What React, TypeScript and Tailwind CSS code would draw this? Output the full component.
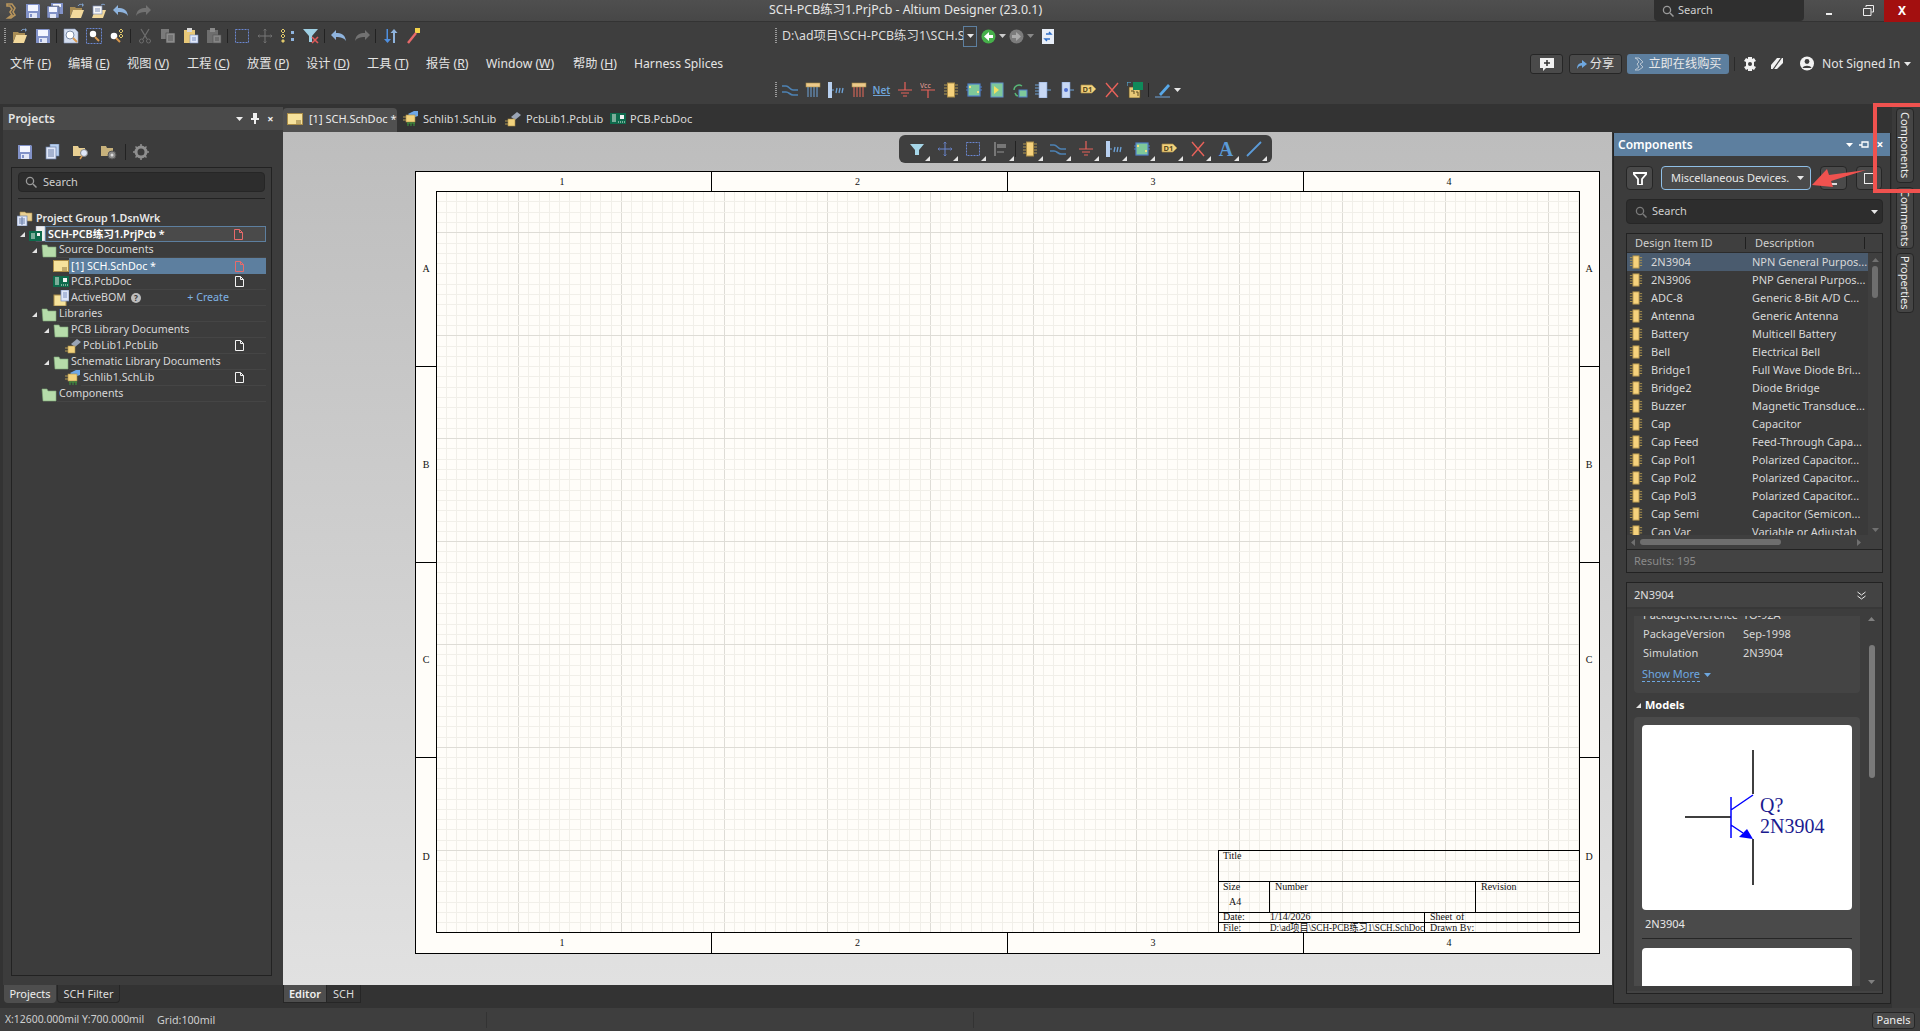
import React from "react";

type N = React.ReactNode;
const Svg = ({ w = 16, h = 16, children }: { w?: number; h?: number; children?: N }) => (
  <svg width={w} height={h} viewBox={`0 0 ${w} ${h}`} className="block shrink-0">
    {children}
  </svg>
);

/* ---------- toolbar icons ---------- */
const Logo = () => (
  <Svg w={12} h={16}>
    <path d="M2 1h5l3 4-2 4 2 3-4 3H3l4-3-2-3 2-3-2-3H2z" fill="none" stroke="#b8955c" strokeWidth="1.6" />
  </Svg>
);
const Floppy = () => (
  <Svg>
    <path d="M1 1h13l1 1v13H1z" fill="#8292c8" />
    <rect x="3" y="2" width="10" height="6" fill="#f4f6ff" />
    <rect x="4" y="10" width="8" height="5" fill="#e3e7f6" />
    <rect x="5" y="11" width="2" height="3" fill="#8292c8" />
  </Svg>
);
const FloppyAll = () => (
  <Svg w={18} h={16}>
    <path d="M5 0h12v11H5z" fill="#8292c8" />
    <rect x="7" y="1" width="8" height="3" fill="#f4f6ff" />
    <path d="M1 3h12v12H1z" fill="#8292c8" stroke="#3f3f3f" strokeWidth=".5" />
    <rect x="3" y="4" width="8" height="5" fill="#f4f6ff" />
    <rect x="4" y="11" width="6" height="4" fill="#e3e7f6" />
  </Svg>
);
const FolderOpen = () => (
  <Svg>
    <path d="M1 4h5l1 1h6v2H4l-3 7z" fill="#a98d55" />
    <path d="M4 7h11l-3 8H1z" fill="#f2d99c" />
    <path d="M9 3c1-2 3-2 5-1" fill="none" stroke="#7f9fc8" />
    <path d="M13 0l2 2-2 2z" fill="#7f9fc8" />
  </Svg>
);
const FolderDoc = () => (
  <Svg>
    <path d="M4 7h11l-3 8H1z" fill="#f2d99c" />
    <rect x="2" y="3" width="9" height="8" fill="#f8f8f8" stroke="#7f8fb8" strokeWidth=".7" />
    <path d="M4 6h5M4 8h5" stroke="#7f8fb8" />
    <path d="M10 2c1-1 3-1 4 0" fill="none" stroke="#7f9fc8" />
  </Svg>
);
const Undo = ({ c = "#8fb4de" }: { c?: string }) => (
  <Svg>
    <path d="M5 2v3c5 0 9 1 10 8-2-3-5-4-10-4v3L0 7z" fill={c} />
  </Svg>
);
const Redo = ({ c = "#727272" }: { c?: string }) => (
  <Svg>
    <path d="M11 2v3C6 5 2 6 1 13c2-3 5-4 10-4v3l5-5z" fill={c} />
  </Svg>
);
const ZoomDoc = () => (
  <Svg>
    <path d="M1 1h11l3 3v11H1z" fill="#d5dff0" stroke="#8a9cc0" strokeWidth=".6" />
    <circle cx="7" cy="7" r="4" fill="#fff" stroke="#7a8ca8" />
    <path d="M10 10l4 4" stroke="#d99a50" strokeWidth="2" />
  </Svg>
);
const ZoomBox = () => (
  <Svg>
    <rect x=".5" y=".5" width="15" height="15" fill="none" stroke="#6a87d0" strokeDasharray="2 1" />
    <circle cx="7" cy="6" r="3.2" fill="#fff" />
    <path d="M9 9l4 4" stroke="#d99a50" strokeWidth="2" />
  </Svg>
);
const ZoomSel = () => (
  <Svg>
    <circle cx="5" cy="8" r="3.3" fill="#fff" />
    <path d="M7 10l4 4" stroke="#d99a50" strokeWidth="2" />
    <path d="M12 1l2 2-2 2-2-2zM12 6l2 2-2 2-2-2z" fill="none" stroke="#e0c86a" />
  </Svg>
);
const Cut = () => (
  <Svg>
    <path d="M4 1l6 10M12 1L6 11" stroke="#6c6c6c" strokeWidth="1.3" />
    <circle cx="4.5" cy="13" r="2" fill="none" stroke="#6c6c6c" />
    <circle cx="11.5" cy="13" r="2" fill="none" stroke="#6c6c6c" />
  </Svg>
);
const Copy = () => (
  <Svg>
    <rect x="1" y="1" width="8" height="10" fill="#7a7a7a" />
    <rect x="6" y="5" width="9" height="10" fill="#8c8c8c" stroke="#444" strokeWidth=".6" />
    <path d="M8 8h5M8 10h5M8 12h5" stroke="#5a5a5a" />
  </Svg>
);
const Paste = ({ on = true }: { on?: boolean }) => (
  <Svg>
    <rect x="1" y="2" width="11" height="13" fill={on ? "#e8c878" : "#6e6e6e"} />
    <rect x="4" y="0" width="5" height="4" fill={on ? "#d8d8d8" : "#8a8a8a"} />
    <rect x="7" y="7" width="8" height="8" fill={on ? "#dfe7f8" : "#858585"} stroke={on ? "#7a8fc0" : "#555"} strokeWidth=".6" />
    <path d="M9 10h4M9 12h4" stroke={on ? "#7a8fc0" : "#555"} />
  </Svg>
);
const DashRect = ({ c = "#6a87d0" }: { c?: string }) => (
  <Svg>
    <rect x="1.5" y="1.5" width="13" height="13" fill="none" stroke={c} strokeDasharray="2 1" strokeWidth="1" />
  </Svg>
);
const Cross = ({ c = "#777" }: { c?: string }) => (
  <Svg>
    <path d="M8 1v14M1 8h14" stroke={c} />
    <path d="M6.5 2.5L8 1l1.5 1.5M6.5 13.5L8 15l1.5-1.5M2.5 6.5L1 8l1.5 1.5M13.5 6.5L15 8l-1.5 1.5" fill="none" stroke={c} strokeWidth=".7" />
  </Svg>
);
const SelToggle = () => (
  <Svg>
    <path d="M3 1l2 2-2 2-2-2zM3 6l2 2-2 2-2-2z" fill="none" stroke="#e0c86a" />
    <path d="M3 11l2 2-2 2-2-2z" fill="#e0c86a" />
    <rect x="11" y="3" width="3" height="3" fill="#8fb4de" />
    <rect x="11" y="10" width="3" height="3" fill="#8fb4de" />
  </Svg>
);
const FilterX = () => (
  <Svg>
    <path d="M0 1h15L9 8v6H6V8z" fill="#9fd0e4" />
    <path d="M9 9l6 6M15 9l-6 6" stroke="#e05a5a" strokeWidth="1.6" />
  </Svg>
);
const UpDown = () => (
  <Svg>
    <path d="M5 15V5H2l3.5-4L9 5H6.500v10z" fill="#4f90e0" transform="rotate(180 5.5 8)" />
    <path d="M11 15V5H8.500L12 1l3.500 4H13v10z" fill="#8fb4de" />
  </Svg>
);
const Wand = () => (
  <Svg>
    <rect x="10" y="0" width="5" height="5" fill="#f2d24a" />
    <path d="M11 5L3 15" stroke="#e86a6a" strokeWidth="2.4" />
  </Svg>
);

const Wires = () => (
  <Svg>
    <path d="M0 4h4c3 0 4 4 7 4h5M0 10h4c3 0 4 3 7 3h5" fill="none" stroke="#4d82b4" strokeWidth="1.6" />
  </Svg>
);
const Bus = ({ red = false }: { red?: boolean }) => (
  <Svg>
    <rect x="1" y="1" width="14" height="4" fill="#ecc98a" stroke="#a98c48" strokeWidth=".6" />
    <path d="M3 5v10M6 5v10M9 5v10M12 5v10" stroke={red ? "#e86a5a" : "#6ea3d8"} />
  </Svg>
);
const PinBar = () => (
  <Svg>
    <rect x="0" y="0" width="4" height="16" fill="#b8d0f0" />
    <path d="M4 8h2" stroke="#6ea3d8" />
    <path d="M8 11l1-5M11 11l1-5M14 11l1-5" stroke="#6ea3d8" strokeWidth="1.3" />
  </Svg>
);
const NetLabel = () => (
  <span className="text-[10px] leading-none font-semibold text-[#6ea3d8] border-b border-[#6ea3d8]">Net</span>
);
const Gnd = () => (
  <Svg>
    <path d="M8 0v8M1 8h14M4 11h8M6 14h4" stroke="#e8625a" strokeWidth="1.2" />
  </Svg>
);
const Vcc = () => (
  <Svg>
    <text x="0" y="6" fontSize="7" fill="#e8a09a">Vcc</text>
    <path d="M1 8h14M8 8v8" stroke="#e8625a" strokeWidth="1.2" />
  </Svg>
);
const Chip = ({ s = 16 }: { s?: number }) => (
  <svg width={s} height={s} viewBox="0 0 16 16" className="block shrink-0">
    <rect x="4.500" y="1" width="7" height="14" fill="#f6d27c" stroke="#a98c48" />
    <path d="M1 3h3M1 6h3M1 9h3M1 12h3M12 3h3M12 6h3M12 9h3M12 12h3" stroke="#b59a50" />
  </svg>
);
const Sheet = () => (
  <Svg>
    <rect x="2" y="2" width="12" height="12" fill="#7ec89a" stroke="#4f7fc8" strokeWidth="1.2" />
    <path d="M0 5h2M0 8h2M14 5h2M14 8h2" stroke="#4f7fc8" />
    <rect x="3" y="4" width="2" height="2" fill="#f2e080" />
    <rect x="11" y="9" width="2" height="2" fill="#f2e080" />
  </Svg>
);
const SheetEntry = () => (
  <Svg>
    <rect x="2" y="1" width="12" height="14" fill="#7ec89a" stroke="#5f8fc8" />
    <path d="M5 4l5 4-5 4z" fill="#f2e060" />
  </Svg>
);
const Recycle = () => (
  <Svg>
    <path d="M2 8a5 5 0 0 1 8-4" fill="none" stroke="#58b878" strokeWidth="1.4" />
    <rect x="7" y="8" width="8" height="7" fill="#7ec89a" stroke="#4f7fc8" />
    <path d="M3 11a4 4 0 0 0 3 3" fill="none" stroke="#58b878" strokeWidth="1.4" />
  </Svg>
);
const DevSheet = ({ dot = false }: { dot?: boolean }) => (
  <Svg>
    <rect x="4" y="0" width="8" height="16" fill="#c8d8f4" stroke="#7a9ad0" strokeWidth=".6" />
    {dot ? <circle cx="8" cy="8" r="2" fill="#4f6fd0" /> : <path d="M0 3h4M0 6h4M0 9h4M0 12h4" stroke="#6ea3d8" />}
    <path d="M12 8h4" stroke="#6ea3d8" />
  </Svg>
);
const Port = () => (
  <svg width="18" height="16" viewBox="0 0 18 16" className="block shrink-0">
    <path d="M1 3h11l4 4-4 4H1z" fill="#f2d27c" stroke="#a98c48" strokeWidth=".7" />
    <text x="2.500" y="10" fontSize="7.500" fontWeight="700" fill="#5a4a20">D1</text>
  </svg>
);
const RedX = () => (
  <Svg>
    <path d="M2 1l12 14M14 1L2 15" stroke="#e8625a" strokeWidth="1.4" />
  </Svg>
);
const Room = () => (
  <Svg>
    <rect x="2" y="5" width="11" height="11" fill="#e8c878" stroke="#5a4a20" strokeWidth=".7" />
    <rect x="6" y="0" width="10" height="8" fill="#0f8a5a" />
    <path d="M4 9h3v3M9 10h2v4" fill="none" stroke="#5a4a20" />
    <path d="M0 4V0h4" fill="none" stroke="#58b8e8" />
  </Svg>
);
const Pen = () => (
  <Svg>
    <path d="M4 12L13 2l2 2-9 10z" fill="#58a8e8" />
    <path d="M0 15h15" stroke="#6ea3d8" />
  </Svg>
);
const Caret = ({ c = "#e8e8e8" }: { c?: string }) => (
  <svg width="7" height="4" viewBox="0 0 7 4" className="block shrink-0">
    <path d="M0 0h7L3.500 4z" fill={c} />
  </svg>
);

/* ---------- tree icons ---------- */
const FolderG = () => (
  <Svg>
    <path d="M1 3h5l1 2h8v10H2z" fill="#b6dcaa" stroke="#7fa878" strokeWidth=".6" />
  </Svg>
);
const SchDoc = () => (
  <Svg w={16} h={13}>
    <rect x=".5" y=".5" width="15" height="11" fill="#f6e29c" stroke="#a98c48" />
    <path d="M9 8h5M9 10h5" stroke="#8a7238" />
  </Svg>
);
const PcbDoc = () => (
  <Svg w={16} h={12}>
    <rect x="0" y="0" width="16" height="11" fill="#0e6a4c" />
    <path d="M2 2h4M2 4h4M2 6h4M2 8h4" stroke="#e8f0e8" />
    <rect x="10" y="2" width="4" height="4" fill="#f2f2f2" />
    <path d="M8 9h7" stroke="#e8f0e8" strokeDasharray="1 1" />
  </Svg>
);
const Bom = () => (
  <Svg>
    <rect x="1" y="5" width="12" height="11" fill="#f6e29c" stroke="#a98c48" />
    <rect x="8" y="0" width="8" height="11" fill="#dfe7f8" stroke="#7a8fc0" strokeWidth=".7" />
    <path d="M10 3h4M10 5h4M10 7h4" stroke="#7a8fc0" />
  </Svg>
);
const PcbLib = () => (
  <Svg>
    <path d="M6 6l6-5 4 3-6 5z" fill="#9aa4b4" />
    <rect x="3" y="8" width="7" height="7" fill="#f2d27c" stroke="#a98c48" strokeWidth=".6" />
    <path d="M0 10h3M0 13h3" stroke="#b59a50" />
  </Svg>
);
const SchLib = () => (
  <Svg>
    <path d="M5 3l6-3h4v5l-6 2z" fill="#6ea8e8" />
    <rect x="3" y="4" width="9" height="7" fill="#f2d27c" stroke="#a98c48" strokeWidth=".6" />
    <path d="M0 6h3M0 9h3" stroke="#b59a50" />
    <path d="M4 12h8M5 12v3M8 12v3M11 12v3" stroke="#3f9a3f" />
  </Svg>
);
const Group = () => (
  <Svg w={16} h={15}>
    <path d="M3 1h5l1 1h6v8H3z" fill="#e8cf92" stroke="#a98c48" strokeWidth=".6" />
    <rect x="0" y="5" width="10" height="10" fill="#dfe7f8" stroke="#6a7fa8" strokeWidth=".7" />
    <path d="M2 8h6M2 10h6M2 12h6M5 6v8" stroke="#6a7fa8" />
  </Svg>
);
const PrjIcon = () => (
  <Svg>
    <rect x="7" y="0" width="9" height="15" fill="#f0f0f0" stroke="#8a9cc0" strokeWidth=".5" />
    <rect x="0" y="5" width="13" height="10" fill="#0e6a4c" />
    <path d="M2 8h4M2 10h4M2 12h4" stroke="#e8f0e8" />
    <rect x="8" y="7" width="3" height="3" fill="#f2f2f2" />
  </Svg>
);
const Doc = ({ c = "#f2f2f2" }: { c?: string }) => (
  <svg width="9" height="11" viewBox="0 0 9 11" className="block shrink-0">
    <path d="M.5.5h5l3 3v7h-8zM5.500.5v3h3" fill="none" stroke={c} />
  </svg>
);
const Tri = () => (
  <svg width="5" height="5" viewBox="0 0 5 5" className="block">
    <path d="M5 0v5H0z" fill="#e4e4e4" />
  </svg>
);
const SearchI = ({ c = "#9a9a9a" }: { c?: string }) => (
  <svg width="12" height="12" viewBox="0 0 12 12" className="block shrink-0">
    <circle cx="5" cy="5" r="3.600" fill="none" stroke={c} strokeWidth="1.3" />
    <path d="M8 8l3.500 3.500" stroke={c} strokeWidth="1.500" />
  </svg>
);

/* ---------- pieces ---------- */
const Slot = ({ children, w = "w-[23px]" }: { children?: N; w?: string }) => (
  <div className={`${w} h-full flex items-center justify-center shrink-0`}>{children}</div>
);
const Sep = () => (
  <div className="w-[5px] h-full flex items-center justify-center shrink-0">
    <div className="w-px h-[14px] bg-[#222]" />
  </div>
);
const Grip = () => (
  <div className="w-[2px] h-[16px] shrink-0 bg-[repeating-linear-gradient(to_bottom,#9a9a9a_0,#9a9a9a_1px,transparent_1px,transparent_2px)]" />
);
const Menu = ({ zh, k, w }: { zh: string; k: string; w: string }) => (
  <span className={`${w} shrink-0 whitespace-nowrap`}>
    {zh} (<span className="underline">{k}</span>)
  </span>
);

type TreeRow = {
  pl: string;
  tri?: boolean;
  icon: N;
  text: N;
  right?: N;
  cls?: string;
};
const Row = ({ pl, tri = true, icon, text, right, cls = "border-b border-[#454545]" }: TreeRow) => (
  <div className={`flex h-4 items-center ${pl}`}>
    <div className="w-[10px] flex justify-center shrink-0">{tri ? <Tri /> : null}</div>
    <div className="w-4 ml-[2px] flex justify-center shrink-0">{icon}</div>
    <div className={`flex-1 h-4 min-w-0 flex items-center justify-between pl-[2px] pr-[22px] whitespace-nowrap ${cls}`}>
      {text}
      {right}
    </div>
  </div>
);

const parts: [string, string][] = [
  ["2N3904", "NPN General Purpos..."],
  ["2N3906", "PNP General Purpos..."],
  ["ADC-8", "Generic 8-Bit A/D C..."],
  ["Antenna", "Generic Antenna"],
  ["Battery", "Multicell Battery"],
  ["Bell", "Electrical Bell"],
  ["Bridge1", "Full Wave Diode Bri..."],
  ["Bridge2", "Diode Bridge"],
  ["Buzzer", "Magnetic Transduce..."],
  ["Cap", "Capacitor"],
  ["Cap Feed", "Feed-Through Capa..."],
  ["Cap Pol1", "Polarized Capacitor..."],
  ["Cap Pol2", "Polarized Capacitor..."],
  ["Cap Pol3", "Polarized Capacitor..."],
  ["Cap Semi", "Capacitor (Semicon..."],
  ["Cap Var", "Variable or Adjustab"],
];

/* ---------- schematic sheet drawing ---------- */
const W = 1185;
const H = 783;
const STEP = 102.96;
const IL = 22;
const IT = 21;
const IR = 1164;
const IB = 761;
function gridLines() {
  const out: N[] = [];
  for (let i = 0; i * STEP / 10 < W; i++) {
    const x = Math.round((i * STEP) / 10) + 0.5;
    if (x > IL && x < IR)
      out.push(<path key={"v" + i} d={`M${x} ${IT}V${IB}`} stroke={i % 10 === 0 ? "#dedcd6" : "#f1efe9"} />);
  }
  for (let i = 0; i * STEP / 10 < H; i++) {
    const y = Math.round(782 - (i * STEP) / 10) + 0.5;
    if (y > IT && y < IB)
      out.push(<path key={"h" + i} d={`M${IL} ${y}H${IR}`} stroke={i % 10 === 0 ? "#dedcd6" : "#f1efe9"} />);
  }
  return out;
}
const SchematicSheet = () => {
  const cols = [147, 442.5, 738, 1034];
  const rows = [
    ["A", 97],
    ["B", 293],
    ["C", 488],
    ["D", 685],
  ] as [string, number][];
  const tx = 804;
  return (
    <svg width={W} height={H} viewBox={`0 0 ${W} ${H}`} className="block shrink-0 font-['Liberation_Serif','Noto_Sans_CJK_SC',serif]">
      <rect x=".5" y=".5" width="1184" height="782" fill="#fffdf9" stroke="#000" />
      <g shapeRendering="crispEdges">
        {gridLines()}
        <rect x={IL - 0.5} y={IT - 0.5} width={IR - IL + 1} height={IB - IT + 1} fill="none" stroke="#000" />
        {[296, 592, 888].map((x) => (
          <path key={x} d={`M${x + 0.5} 0V${IT}M${x + 0.5} ${IB}V${H}`} stroke="#000" />
        ))}
        {[195, 391, 586].map((y) => (
          <path key={y} d={`M0 ${y + 0.5}H${IL}M${IR} ${y + 0.5}H${W}`} stroke="#000" />
        ))}
        <path
          d={`M${tx - 0.5} 679.500H${IR}M${tx - 0.5} 710.500H${IR}M${tx - 0.5} 741.500H${IR}M${tx - 0.5} 751.500H${IR}M${tx - 0.5} 679V${IB}M854.500 710V741M1060.500 710V741M1009.500 741V${IB}`}
          fill="none"
          stroke="#000"
        />
      </g>
      <g fontSize="10" fill="#111" textAnchor="middle">
        {cols.map((x, i) => (
          <React.Fragment key={x}>
            <text x={x} y="14">{i + 1}</text>
            <text x={x} y="775">{i + 1}</text>
          </React.Fragment>
        ))}
        {rows.map(([t, y]) => (
          <React.Fragment key={t}>
            <text x="11" y={y + 4}>{t}</text>
            <text x="1174" y={y + 4}>{t}</text>
          </React.Fragment>
        ))}
      </g>
      <g fontSize="10" fill="#111">
        <text x="808" y="688">Title</text>
        <text x="808" y="719">Size</text>
        <text x="814" y="734">A4</text>
        <text x="860" y="719">Number</text>
        <text x="1066" y="719">Revision</text>
        <text x="808" y="749">Date:</text>
        <text x="855" y="749">1/14/2026</text>
        <text x="1015" y="749">Sheet</text>
        <text x="1041" y="749">of</text>
        <text x="808" y="760">File:</text>
        <text x="855" y="760" textLength="154" lengthAdjust="spacingAndGlyphs">D:\ad项目\SCH-PCB练习1\SCH.SchDoc</text>
        <text x="1015" y="760">Drawn By:</text>
      </g>
    </svg>
  );
};

const Transistor = () => (
  <svg width="210" height="185" viewBox="0 0 210 185" className="block font-['Liberation_Serif',serif]">
    <path d="M111 25v44M43 92h46M111 114v46" stroke="#000" strokeWidth="1.500" fill="none" />
    <path d="M89 72v41M89 85l22-15M89 100l12 8" stroke="#0000ff" strokeWidth="1.500" fill="none" />
    <path d="M97 112l8-8 6 10z" fill="#0000ff" />
    <text x="118" y="87" fontSize="20" fill="#1b1b8f">Q?</text>
    <text x="118" y="108" fontSize="20" fill="#1b1b8f">2N3904</text>
  </svg>
);

const ftools: N[] = [
  <svg key="f" width="16" height="16" viewBox="0 0 16 16"><path d="M1 3h14L10 9v5H6V9z" fill="#a6d6e8" /></svg>,
  <Cross key="c" c="#6a87d0" />,
  <DashRect key="d" />,
  <svg key="a" width="16" height="16" viewBox="0 0 16 16"><path d="M2 1v14" stroke="#777" strokeWidth="2" /><rect x="4" y="3" width="9" height="4" fill="#777" /><path d="M4 11h7" stroke="#777" strokeWidth="1.500" /></svg>,
];
const ftools2: N[] = [
  <Chip key="1" />,
  <Wires key="2" />,
  <Gnd key="3" />,
  <PinBar key="4" />,
  <Sheet key="5" />,
  <Port key="6" />,
  <RedX key="7" />,
  <span key="8" className="font-['Liberation_Serif',serif] font-bold text-[20px] leading-none text-[#5b9bd8]">A</span>,
  <svg key="9" width="16" height="16" viewBox="0 0 16 16"><path d="M1 15L15 1" stroke="#5b9bd8" strokeWidth="1.800" /></svg>,
];
const FTool = ({ children }: { children?: N }) => (
  <div className="relative w-[28px] h-full flex items-center justify-center shrink-0">
    {children}
    <div className="absolute right-[1px] bottom-[2px]"><Tri /></div>
  </div>
);

const VTab = ({ t, h }: { t: string; h: string }) => (
  <div className={`${h} w-[18px] rounded-[4px] border border-[#262626] bg-[#454545] flex items-center justify-center text-[11px] text-[#eee] [writing-mode:vertical-rl] whitespace-nowrap overflow-hidden`}>
    {t}
  </div>
);

export default function App() {
  return (
    <div className="relative w-[1920px] h-[1031px] overflow-hidden bg-[#3e3e3e] text-[11px] text-[#dcdcdc] font-['Noto_Sans','Noto_Sans_CJK_SC',sans-serif]">
      {/* title bar */}
      <div className="flex items-center h-[22px] bg-[linear-gradient(to_bottom,#4f4f4f,#474747)] border-b border-[#333]">
        <div className="flex h-full w-[769px] shrink-0">
          <Slot w="w-[22px]"><Logo /></Slot>
          <Slot w="w-[22px]"><Floppy /></Slot>
          <Slot w="w-[22px]"><FloppyAll /></Slot>
          <Slot w="w-[22px]"><FolderOpen /></Slot>
          <Slot w="w-[22px]"><FolderDoc /></Slot>
          <Slot w="w-[22px]"><Undo /></Slot>
          <Slot w="w-[22px]"><Redo /></Slot>
        </div>
        <div className="text-[12.4px] text-[#e6e6e6] whitespace-nowrap w-[885px]">SCH-PCB练习1.PrjPcb - Altium Designer (23.0.1)</div>
        <div className="w-[150px] h-[21px] bg-[#2f2f2f] rounded-b-[4px] flex items-center pl-[8px] gap-[4px] text-[#cfcfcf] shrink-0">
          <SearchI />
          Search
        </div>
        <div className="w-[80px] flex h-full items-center shrink-0">
          <div className="w-[49px] flex justify-center pt-[6px]"><div className="w-[6px] h-[2px] bg-[#eee]" /></div>
          <div className="w-[31px] flex justify-center">
            <svg width="11" height="11" viewBox="0 0 11 11"><path d="M3 2V.5h7.500V7H8.500M.5 3.500h7.500v7H.5z" fill="none" stroke="#eee" /></svg>
          </div>
        </div>
        <div className="w-[36px] h-[22px] bg-[#a30f0f] flex items-center justify-center shrink-0 text-white font-bold text-[12px]">X</div>
      </div>

      {/* standard toolbar + address */}
      <div className="flex items-center h-[28px]">
        <div className="w-[775px] flex h-full items-center pl-[4px] shrink-0">
          <Grip />
          <div className="w-[2px]" />
          <Slot><FolderOpen /></Slot>
          <Slot><Floppy /></Slot>
          <Sep />
          <Slot><ZoomDoc /></Slot>
          <Slot><ZoomBox /></Slot>
          <Slot><ZoomSel /></Slot>
          <Sep />
          <Slot><Cut /></Slot>
          <Slot><Copy /></Slot>
          <Slot><Paste /></Slot>
          <Slot><Paste on={false} /></Slot>
          <Sep />
          <Slot><DashRect /></Slot>
          <Slot><Cross /></Slot>
          <Slot><SelToggle /></Slot>
          <Slot><FilterX /></Slot>
          <Sep />
          <Slot><Undo /></Slot>
          <Slot><Redo /></Slot>
          <Sep />
          <Slot><UpDown /></Slot>
          <Slot><Wand /></Slot>
        </div>
        <Grip />
        <div className="w-[186px] pl-[5px] text-[12.4px] text-[#dcdcdc] whitespace-nowrap overflow-hidden shrink-0">D:\ad项目\SCH-PCB练习1\SCH.SchDoc</div>
        <div className="w-[14px] h-[21px] border border-[#5d7f9f] flex items-center justify-center shrink-0"><Caret /></div>
        <div className="flex items-center ml-[4px] gap-[3px]">
          <svg width="15" height="15" viewBox="0 0 15 15"><circle cx="7.500" cy="7.500" r="7" fill="#46b04a" /><path d="M3 7.500L8 3v3h4v3H8v3z" fill="#fff" /></svg>
          <Caret c="#ccc" />
          <svg width="15" height="15" viewBox="0 0 15 15"><circle cx="7.500" cy="7.500" r="7" fill="#7c7c7c" /><path d="M12 7.500L7 3v3H3v3h4v3z" fill="#aaa" /></svg>
          <Caret c="#888" />
          <div className="w-[2px]" />
          <svg width="12" height="15" viewBox="0 0 12 15"><rect width="12" height="15" fill="#e8eef8" /><path d="M4 5h5L7 3M8 10H3l2 2" fill="none" stroke="#2f6fc8" strokeWidth="1.400" /></svg>
        </div>
      </div>

      {/* menu row */}
      <div className="flex items-center h-[28px] text-[12.2px] text-[#e4e4e4]">
        <div className="flex items-center w-[1530px] pl-[10px] shrink-0 gap-[16px]">
          <Menu zh="文件" k="F" w="w-[42px]" />
          <Menu zh="编辑" k="E" w="w-[43px]" />
          <Menu zh="视图" k="V" w="w-[44px]" />
          <Menu zh="工程" k="C" w="w-[44px]" />
          <Menu zh="放置" k="P" w="w-[43px]" />
          <Menu zh="设计" k="D" w="w-[45px]" />
          <Menu zh="工具" k="T" w="w-[43px]" />
          <Menu zh="报告" k="R" w="w-[44px]" />
          <Menu zh="Window" k="W" w="w-[71px]" />
          <Menu zh="帮助" k="H" w="w-[45px]" />
          <span className="whitespace-nowrap">Harness Splices</span>
        </div>
        <div className="w-[33px] h-[20px] rounded-[3px] border border-[#262626] bg-[#4a4a4a] flex items-center justify-center shrink-0">
          <svg width="14" height="13" viewBox="0 0 14 13"><path d="M0 0h14v10H6l-3 3v-3H0z" fill="#f2f2f2" /><path d="M7 2v6M4 5h6" stroke="#333" strokeWidth="1.500" /></svg>
        </div>
        <div className="w-[53px] ml-[6px] h-[20px] rounded-[3px] border border-[#262626] bg-[#4a4a4a] flex items-center justify-center gap-[3px] shrink-0">
          <svg width="10" height="10" viewBox="0 0 10 10"><path d="M0 10c0-4 2-6 5-6V1l5 4-5 4V6.500c-2 0-4 1-5 3.500z" fill="#6fa8e0" /></svg>
          分享
        </div>
        <div className="w-[102px] ml-[5px] h-[20px] rounded-[3px] bg-[#5d7f9f] flex items-center justify-center gap-[4px] text-[#e8e8e8] shrink-0">
          <svg width="10" height="14" viewBox="0 0 10 14"><path d="M1 1h4l4 4-3 2 3 3-4 3H1l4-3-2-3 2-2-2-3z" fill="none" stroke="#b8c4d0" /></svg>
          立即在线购买
        </div>
        <div className="w-[6px] h-[14px] border-r border-[#2a2a2a] shrink-0" />
        <div className="w-[30px] flex justify-center shrink-0">
          <svg width="14" height="14" viewBox="0 0 14 14"><path d="M5 0h4v2l2-1 2 3-2 1v4l2 1-2 3-2-1v2H5v-2l-2 1-2-3 2-1V5L1 4l2-3 2 1z" fill="#f2f2f2" /><circle cx="7" cy="7" r="2" fill="#3e3e3e" /></svg>
        </div>
        <div className="w-[24px] flex justify-center shrink-0">
          <svg width="14" height="14" viewBox="0 0 14 14"><path d="M1 12V8l6-7h6v5l-6 6z" fill="#f2f2f2" /><path d="M12 0L2 14" stroke="#3e3e3e" strokeWidth="1.200" /></svg>
        </div>
        <div className="flex items-center shrink-0 ml-[11px] text-[#e4e4e4]">
          <svg width="14" height="15" viewBox="0 0 14 15"><circle cx="7" cy="7.500" r="7" fill="#f2f2f2" /><circle cx="7" cy="5.500" r="2.400" fill="#3e3e3e" /><path d="M2.500 12c1-3 8-3 9 0z" fill="#3e3e3e" /></svg>
          <span className="ml-[8px] whitespace-nowrap">Not Signed In</span>
          <span className="ml-[4px]"><Caret /></span>
        </div>
      </div>

      {/* placement toolbar */}
      <div className="flex items-center h-[26px] pl-[775px] pb-[2px]">
        <Grip />
        <div className="w-[1px]" />
        <Slot><Wires /></Slot>
        <Slot><Bus /></Slot>
        <Slot><PinBar /></Slot>
        <Slot><Bus red /></Slot>
        <Slot><NetLabel /></Slot>
        <Slot><Gnd /></Slot>
        <Slot><Vcc /></Slot>
        <Slot><Chip /></Slot>
        <Slot><Sheet /></Slot>
        <Slot><SheetEntry /></Slot>
        <Slot><Recycle /></Slot>
        <Slot><DevSheet /></Slot>
        <Slot><DevSheet dot /></Slot>
        <Slot><Port /></Slot>
        <Slot><RedX /></Slot>
        <Slot><Room /></Slot>
        <Sep />
        <Slot><Pen /></Slot>
        <Caret />
      </div>

      {/* workspace */}
      <div className="flex h-[904px] bg-[#333]">
        {/* projects panel */}
        <div className="w-[283px] shrink-0 pl-[3px] pt-[3px] flex flex-col">
          <div className="h-[23px] bg-[#4a4a4a] flex items-center pl-[5px] shrink-0">
            <span className="font-semibold text-[12px] text-[#e4e4e4] flex-1">Projects</span>
            <div className="w-[15px] flex justify-center"><Caret c="#eee" /></div>
            <div className="w-[15px] flex justify-center">
              <svg width="8" height="11" viewBox="0 0 8 11"><path d="M2 0h4v5h2v2H5v4H3V7H0V5h2z" fill="#eee" /></svg>
            </div>
            <div className="w-[17px] flex justify-center font-bold text-[#eee] text-[11px] leading-none">×</div>
            <div className="w-[4px]" />
          </div>
          <div className="h-[855px] bg-[#3c3c3c] flex flex-col shrink-0">
            <div className="h-[37px] flex items-center pl-[8px] pt-[7px] shrink-0">
              <Slot w="w-[28px]"><Floppy /></Slot>
              <Slot w="w-[28px]">
                <Svg><rect x="5" y="0" width="9" height="12" fill="#b8d0f0" stroke="#6a7fa8" strokeWidth=".6" /><rect x="1" y="3" width="10" height="12" fill="#dfe7f8" stroke="#6a7fa8" strokeWidth=".7" /><path d="M3 6h6M3 8h6M3 10h6M3 12h6" stroke="#6a7fa8" /></Svg>
              </Slot>
              <Slot w="w-[28px]">
                <Svg><path d="M0 2h5l1 2h6v8H0z" fill="#e8cf92" /><circle cx="11" cy="9" r="3.500" fill="#dfe7f8" stroke="#888" /><path d="M9 12l-2 3" stroke="#d99a50" strokeWidth="1.500" /></Svg>
              </Slot>
              <Slot w="w-[28px]">
                <Svg><path d="M0 2h5l1 2h6v8H0z" fill="#c8b27c" /><circle cx="11" cy="11" r="4" fill="#8a8a8a" stroke="#555" /><circle cx="11" cy="11" r="1.500" fill="#ddd" /></Svg>
              </Slot>
              <div className="w-[4px] flex justify-center"><div className="w-px h-[16px] bg-[#222]" /></div>
              <Slot w="w-[28px]">
                <Svg><circle cx="8" cy="8" r="5" fill="none" stroke="#8f8f8f" strokeWidth="3" /><path d="M8 0v3M8 13v3M0 8h3M13 8h3M2.500 2.500l2 2M11.500 11.500l2 2M2.500 13.500l2-2M11.500 4.500l2-2" stroke="#8f8f8f" strokeWidth="1.500" /></Svg>
              </Slot>
            </div>
            <div className="w-[261px] h-[809px] ml-[8px] border border-[#222] pt-[4px] shrink-0">
              <div className="ml-[6px] w-[247px] h-[20px] bg-[#2d2d2d] rounded-[4px] border border-[#262626] flex items-center pl-[6px] gap-[6px] text-[#cfcfcf]">
                <SearchI />
                Search
              </div>
              <div className="ml-[6px] w-[247px] mt-[6px] border-b border-[#222]" />
              <div className="mt-[11px] w-[254px] text-[10.7px] text-[#d8d8d8]">
                <div className="flex h-4 items-center pl-[5px] gap-[3px] text-[#e8e8e8] font-semibold whitespace-nowrap">
                  <Group />
                  Project Group 1.DsnWrk
                </div>
                <Row pl="pl-[5px]" icon={<PrjIcon />} cls="bg-[#4a4a4a] border border-[#5d7f9f] font-semibold text-white" text={<span>SCH-PCB练习1.PrjPcb *</span>} right={<Doc c="#e86a6a" />} />
                <Row pl="pl-[17px]" icon={<FolderG />} text="Source Documents" />
                <Row pl="pl-[29px]" tri={false} icon={<SchDoc />} cls="bg-[#5d7f9f] text-white" text="[1] SCH.SchDoc *" right={<Doc c="#e86a6a" />} />
                <Row pl="pl-[29px]" tri={false} icon={<PcbDoc />} text="PCB.PcbDoc" right={<Doc />} />
                <Row
                  pl="pl-[29px]"
                  tri={false}
                  icon={<Bom />}
                  text={
                    <span className="flex items-center">
                      ActiveBOM
                      <span className="ml-[5px] w-[10px] h-[10px] rounded-full bg-[#bdbdbd] text-[#333] text-[8px] font-bold leading-[10px] text-center">?</span>
                    </span>
                  }
                  right={<span className="text-[#7fb2e5] mr-[15px]">+ Create</span>}
                />
                <Row pl="pl-[17px]" icon={<FolderG />} text="Libraries" />
                <Row pl="pl-[29px]" icon={<FolderG />} text="PCB Library Documents" />
                <Row pl="pl-[41px]" tri={false} icon={<PcbLib />} text="PcbLib1.PcbLib" right={<Doc />} />
                <Row pl="pl-[29px]" icon={<FolderG />} text="Schematic Library Documents" />
                <Row pl="pl-[41px]" tri={false} icon={<SchLib />} text="Schlib1.SchLib" right={<Doc />} />
                <Row pl="pl-[17px]" tri={false} icon={<FolderG />} text="Components" />
              </div>
            </div>
          </div>
          <div className="flex pl-[1px] h-[18px] shrink-0">
            <div className="w-[52px] pt-[1px] bg-[#4e4e4e] rounded-b-[4px] flex items-center justify-center text-[#eee]">Projects</div>
            <div className="w-[63px] pt-[1px] ml-[1px] border border-t-0 border-[#262626] rounded-b-[4px] flex items-center justify-center">SCH Filter</div>
          </div>
        </div>

        {/* center */}
        <div className="w-[1329px] shrink-0 flex flex-col">
          <div className="h-[28px] flex items-end shrink-0">
            <div className="w-[114px] h-[24px] pb-[2px] bg-[#505050] rounded-t-[4px] flex items-center pl-[4px] gap-[6px] text-[#ececec] whitespace-nowrap shrink-0">
              <SchDoc />
              [1] SCH.SchDoc *
            </div>
            <div className="h-[24px] pb-[2px] flex items-center whitespace-nowrap shrink-0">
              <div className="ml-[6px]"><SchLib /></div>
              <span className="ml-[4px] w-[76px]">Schlib1.SchLib</span>
              <div className="ml-[6px]"><PcbLib /></div>
              <span className="ml-[5px] w-[81px]">PcbLib1.PcbLib</span>
              <div className="ml-[3px]"><PcbDoc /></div>
              <span className="ml-[4px]">PCB.PcbDoc</span>
            </div>
          </div>
          <div className="relative h-[853px] shrink-0 pl-[132px] pt-[39px] bg-[linear-gradient(to_bottom,#bdbdbd,#e1e1e1)]">
            <SchematicSheet />
            <div className="absolute left-[616px] top-[3px] w-[373px] h-[28px] rounded-[6px] bg-[#3f3f3f] flex pl-[4px]">
              {ftools.map((n, i) => <FTool key={i}>{n}</FTool>)}
              <div className="w-px h-[16px] bg-[#222] my-[6px]" />
              {ftools2.map((n, i) => <FTool key={i}>{n}</FTool>)}
            </div>
          </div>
          <div className="flex h-[18px] shrink-0">
            <div className="w-[44px] pt-[1px] bg-[#4e4e4e] border-x border-b border-[#262626] flex items-center justify-center font-semibold text-[#f0f0f0]">Editor</div>
            <div className="w-[34px] pt-[1px] border-r border-b border-[#262626] flex items-center justify-center">SCH</div>
          </div>
        </div>

        {/* components panel */}
        <div className="w-[280px] shrink-0 pl-[1px] pt-[29px]">
          <div className="w-[278px] h-[871px] bg-[#3c3c3c] border border-[#222] border-t-0 flex flex-col">
            <div className="h-[23px] bg-[#5d7f9f] flex items-center pl-[4px] shrink-0">
              <span className="font-semibold text-[12px] text-white flex-1">Components</span>
              <div className="w-[12px] flex justify-center"><Caret c="#fff" /></div>
              <div className="w-[18px] flex justify-center">
                <svg width="10" height="8" viewBox="0 0 10 8"><path d="M0 4h3M3 1h6v5H3z" fill="none" stroke="#fff" strokeWidth="1.300" /></svg>
              </div>
              <div className="w-[14px] flex justify-center font-bold text-white text-[12px] leading-none">×</div>
              <div className="w-[3px]" />
            </div>
            <div className="flex pl-[12px] pt-[10px] items-center shrink-0">
              <div className="w-[27px] h-[24px] bg-[#4a4a4a] border border-[#262626] rounded-[4px] flex items-center justify-center">
                <svg width="14" height="13" viewBox="0 0 14 13"><path d="M0 1h14L9 7v6H5V7z" fill="none" stroke="#fff" strokeWidth="1.800" /></svg>
              </div>
              <div className="w-[150px] ml-[8px] h-[24px] rounded-[4px] border border-[#8fbfe6] bg-[#4a4a4a] flex items-center pl-[9px] pr-[6px] justify-between text-[#e8e8e8] whitespace-nowrap">
                Miscellaneous Devices.
                <Caret />
              </div>
              <div className="w-[27px] ml-[9px] h-[24px] bg-[#4a4a4a] border border-[#262626] rounded-[4px] flex items-end justify-center pb-[4px]">
                <div className="w-[7px] h-[2px] bg-[#ddd]" />
              </div>
              <div className="w-[26px] ml-[9px] h-[24px] bg-[#4a4a4a] border border-[#262626] rounded-[4px] flex items-center justify-center">
                <div className="w-[11px] h-[11px] border border-[#eee]" />
              </div>
            </div>
            <div className="ml-[12px] mt-[9px] w-[257px] h-[25px] bg-[#2d2d2d] rounded-[4px] border border-[#262626] flex items-center pl-[8px] pr-[4px] text-[#cfcfcf] shrink-0">
              <SearchI c="#7a7a7a" />
              <span className="ml-[5px] flex-1">Search</span>
              <Caret />
            </div>
            <div className="ml-[12px] mt-[9px] w-[257px] h-[340px] border border-[#222] bg-[#434343] flex flex-col shrink-0">
              <div className="h-[19px] flex items-center text-[#cfcfcf] shrink-0 bg-[#3f3f3f] border-b border-[#2b2b2b]">
                <span className="w-[119px] pl-[8px] h-[12px] flex items-center border-r border-[#1f1f1f]">Design Item ID</span>
                <span className="w-[119px] pl-[9px] h-[12px] flex items-center border-r border-[#1f1f1f]">Description</span>
              </div>
              <div className="flex h-[282px] shrink-0 bg-[#3a3a3a]">
                <div className="w-[241px] overflow-hidden shrink-0">
                  {parts.map(([a, b], i) => (
                    <div key={a} className={`h-[18px] flex items-center pl-[2px] shrink-0 ${i === 0 ? "bg-[#4a5b6e]" : ""}`}>
                      <Chip s={14} />
                      <span className="w-[101px] ml-[8px] text-[#d8d8d8] shrink-0">{a}</span>
                      <span className="text-[#d8d8d8] whitespace-nowrap">{b}</span>
                    </div>
                  ))}
                </div>
                <div className="flex-1 flex flex-col items-center pt-[5px] pb-[3px] bg-[#3f3f3f]">
                  <svg width="7" height="4" viewBox="0 0 7 4"><path d="M0 4h7L3.500 0z" fill="#707070" /></svg>
                  <div className="w-[6px] h-[32px] mt-[4px] rounded-full bg-[#6e6e6e]" />
                  <div className="flex-1" />
                  <Caret c="#707070" />
                </div>
              </div>
              <div className="h-[14px] flex items-center pl-[4px] bg-[#3f3f3f] shrink-0">
                <svg width="4" height="7" viewBox="0 0 4 7"><path d="M4 0v7L0 3.500z" fill="#707070" /></svg>
                <div className="w-[141px] h-[6px] ml-[5px] rounded-full bg-[#6e6e6e]" />
                <div className="w-[76px]" />
                <svg width="4" height="7" viewBox="0 0 4 7"><path d="M0 0v7l4-3.500z" fill="#707070" /></svg>
              </div>
              <div className="flex-1 border-t border-[#222] flex items-center pl-[7px] text-[#8a8a8a]">Results: 195</div>
            </div>
            <div className="ml-[12px] mt-[9px] w-[257px] h-[412px] border border-[#222] bg-[#434343] flex flex-col shrink-0">
              <div className="h-[24px] flex items-center pl-[7px] pr-[16px] justify-between text-[#e0e0e0] shrink-0">
                2N3904
                <svg width="9" height="9" viewBox="0 0 9 9"><path d="M.5 1l4 3 4-3M.5 5l4 3 4-3" fill="none" stroke="#e8e8e8" /></svg>
              </div>
              <div className="h-[2px] bg-[#383838] shrink-0" />
              <div className="flex h-[382px] shrink-0 bg-[#3d3d3d] pl-[7px] pt-[7px]">
                <div className="w-[226px] h-[370px] overflow-hidden shrink-0">
                  <div className="h-[77px] rounded-b-[4px] bg-[#444] pl-[9px] text-[#d8d8d8] overflow-hidden">
                    {[["PackageReference", "TO-92A"], ["PackageVersion", "Sep-1998"], ["Simulation", "2N3904"]].map(([a, b], i) => (
                      <div key={a} className={`h-[19px] flex items-center ${i === 0 ? "-mt-[10px]" : ""}`}>
                        <span className="w-[100px] shrink-0">{a}</span>
                        {b}
                      </div>
                    ))}
                    <div className="flex items-center gap-[4px] mt-[4px] -ml-[1px] text-[#6ea8e0]">
                      <span className="border-b border-dashed border-[#6ea8e0] leading-[14px]">Show More</span>
                      <Caret c="#6ea8e0" />
                    </div>
                  </div>
                  <div className="h-[24px] flex items-center pl-[2px] font-bold text-white gap-[4px]">
                    <Tri />
                    Models
                  </div>
                  <div className="h-[269px] rounded-t-[4px] bg-[#4a4a4a] px-[8px] pt-[8px] overflow-hidden">
                    <div className="h-[185px] rounded-[4px] bg-white"><Transistor /></div>
                    <div className="h-[29px] flex items-center pl-[3px] text-[#e8e8e8] border-b border-[#262626] -mb-px">2N3904</div>
                    <div className="h-[60px] mt-[10px] rounded-t-[4px] bg-white" />
                  </div>
                </div>
                <div className="w-[24px] flex flex-col items-center pt-[1px] pb-[7px] pl-[1px]">
                  <svg width="7" height="4" viewBox="0 0 7 4"><path d="M0 4h7L3.500 0z" fill="#808080" /></svg>
                  <div className="w-[6px] h-[133px] mt-[24px] rounded-full bg-[#7a7a7a]" />
                  <div className="flex-1" />
                  <Caret c="#808080" />
                </div>
              </div>
            </div>
          </div>
        </div>

        {/* dock */}
        <div className="flex-1 bg-[#3a3a3a] flex flex-col pt-[4px] pl-[4px] gap-[4px]">
          <VTab t="Components" h="h-[75px]" />
          <VTab t="Comments" h="h-[62px]" />
          <VTab t="Properties" h="h-[60px]" />
        </div>
      </div>

      {/* status bar */}
      <div className="h-[23px] pt-[1px] bg-[#3e3e3e] flex items-center pl-[5px] text-[#cfcfcf] whitespace-nowrap">
        <span className="w-[152px] shrink-0 text-[10.4px]">X:12600.000mil Y:700.000mil</span>
        <span className="w-[329px] shrink-0 text-[10.7px]">Grid:100mil</span>
        <div className="w-px h-[16px] bg-[#333] shrink-0" />
        <div className="w-[486px] shrink-0" />
        <div className="w-px h-[16px] bg-[#333] shrink-0" />
        <div className="flex-1" />
        <div className="w-[43px] h-[17px] mr-[5px] rounded-[3px] border border-[#262626] bg-[#4a4a4a] flex items-center justify-center text-[#eee]">Panels</div>
      </div>

      {/* annotation overlays */}
      <div className="absolute left-[1873px] top-[103px] w-[60px] h-[90px] border-[4px] border-[#f0524f]" />
      <svg width="70" height="30" viewBox="0 0 70 30" className="absolute left-[1805px] top-[163px]">
        <path d="M7 22L22 6l2 6 37-5-35 11 2 6z" fill="#f0524f" />
      </svg>
    </div>
  );
}
